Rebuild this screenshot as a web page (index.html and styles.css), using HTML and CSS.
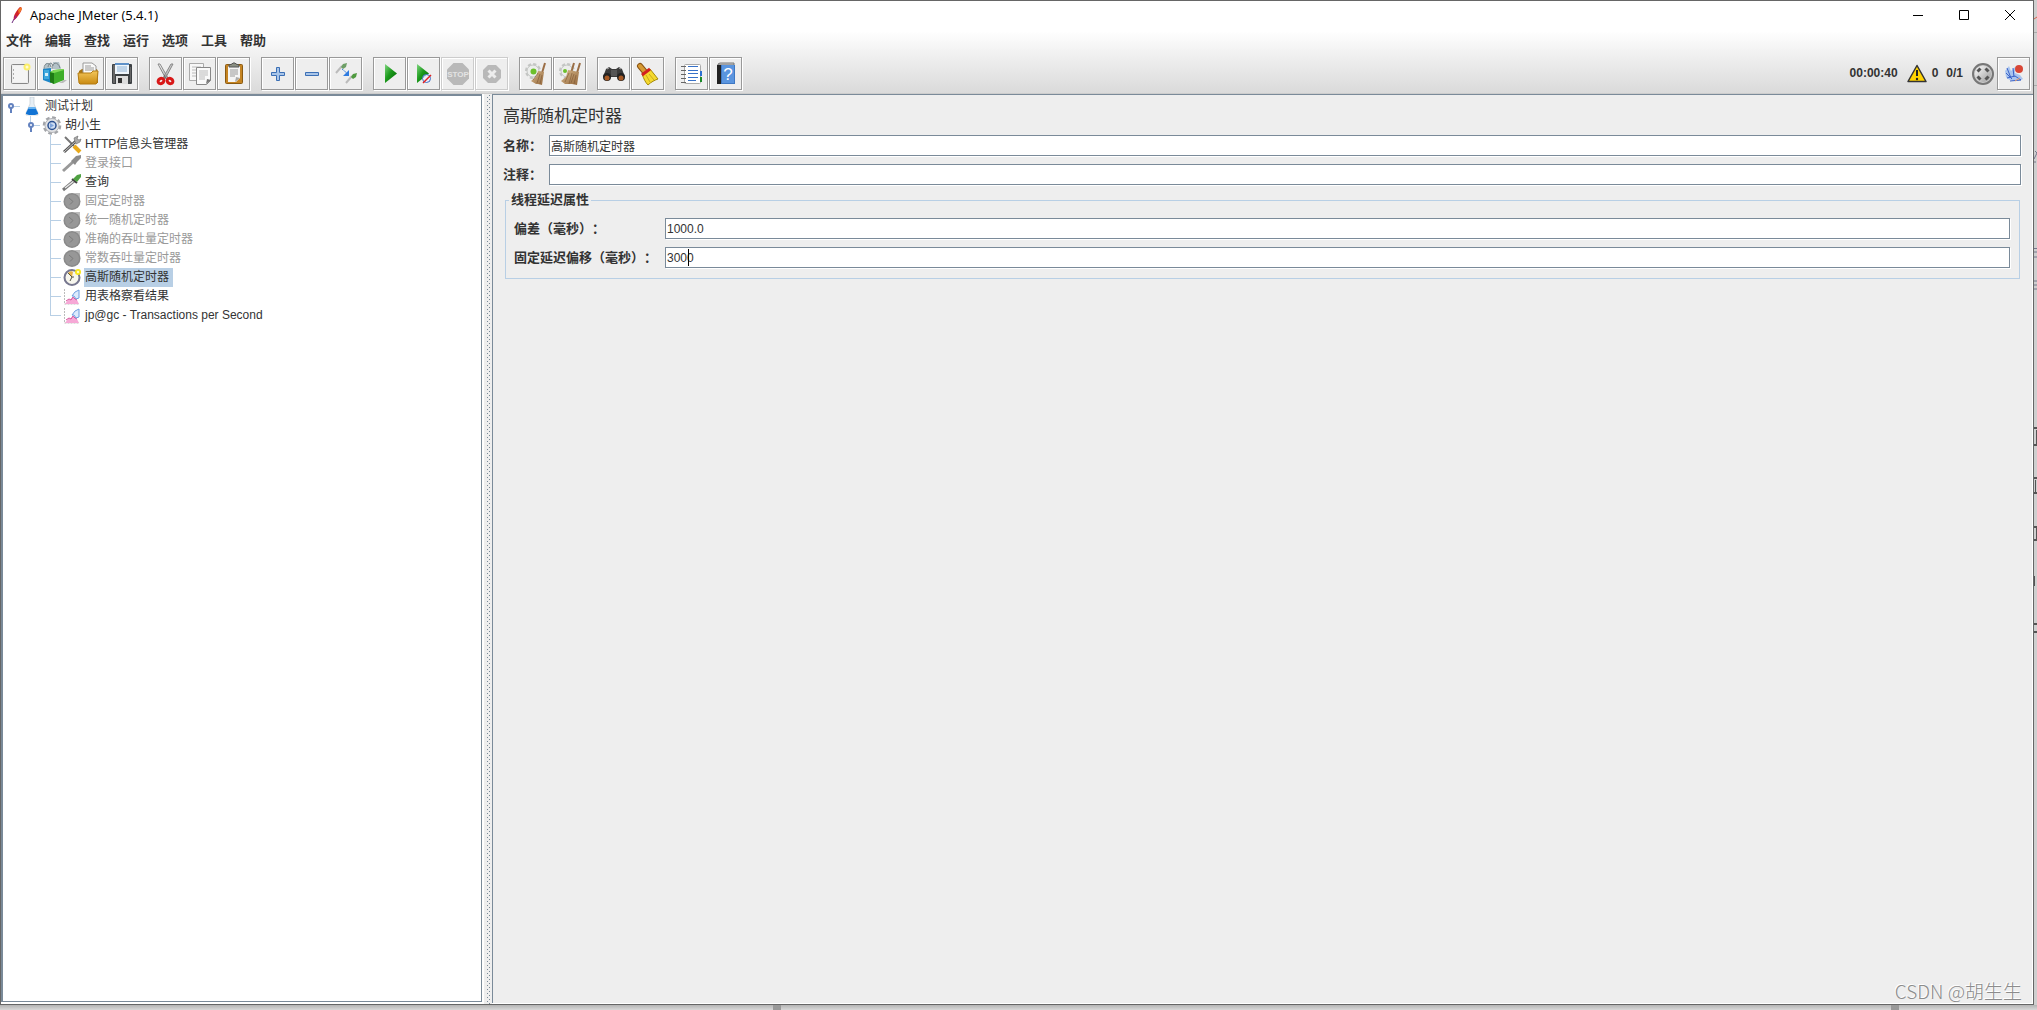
FILE: index.html
```
<!DOCTYPE html>
<html lang="zh-CN">
<head>
<meta charset="utf-8">
<title>Apache JMeter (5.4.1)</title>
<link rel="stylesheet" href="styles.css">
</head>
<body>
<svg class="defs" width="0" height="0" aria-hidden="true">
  <defs>
    <linearGradient id="steel" x1="0" y1="0" x2="1" y2="1"><stop offset="0" stop-color="#fff"/><stop offset="1" stop-color="#999"/></linearGradient>
    <linearGradient id="gold" x1="0" y1="0" x2="0" y2="1"><stop offset="0" stop-color="#f3c65a"/><stop offset="1" stop-color="#c98a12"/></linearGradient>
    <linearGradient id="play" x1="0" y1="0" x2="1" y2="1"><stop offset="0" stop-color="#7fd67f"/><stop offset=".45" stop-color="#1c9a1c"/><stop offset="1" stop-color="#006400"/></linearGradient>
    <linearGradient id="straw" x1="0" y1="0" x2="1" y2="1"><stop offset="0" stop-color="#d8b98c"/><stop offset="1" stop-color="#94683c"/></linearGradient>
    <symbol id="clock" viewBox="0 0 20 19"><path d="M13 1h5v6z" fill="#bbb"/><circle cx="10" cy="9.500" r="8.500" fill="#8a8a8a"/><circle cx="10" cy="9.500" r="7" fill="#979797"/><path d="M7 6l4 3.500-3 3" fill="none" stroke="#7c7c7c"/></symbol>
    <symbol id="chart" viewBox="0 0 20 19"><path d="M2.500 2v15h15" fill="none" stroke="#bbb" stroke-dasharray="2 1"/><path d="M3 17l3-4 2 0 3-3 2 2 2 1 2 4z" fill="#f6a8d6"/><path d="M4 14l3-2 2 1 2-3 2 2 2 1" fill="none" stroke="#d64f9b"/><path d="M10 9l3-4 4-2v8l-3 1z" fill="#dcebfd"/><path d="M10 9l3-4 4-2v8l-3 1-2-3z" fill="none" stroke="#6f9ee0"/></symbol>
  </defs>
</svg>
<div class="window">
  <header class="titlebar">
    <svg class="feather" viewBox="0 0 12 16" aria-hidden="true"><path d="M10 0c1 1 1 3-1 6S5 12 3 13c-1-2 0-5 2-8s3-5 5-5z" fill="#d22128"/><path d="M7 3l3-3 1 2-3 5z" fill="#f27a24"/><path d="M4 8l-1 5 3-3z" fill="#9b2480"/><path d="M3 12l-2 4" stroke="#6d2a7c"/></svg>
    <h1>Apache JMeter (5.4.1)</h1>
    <div class="wincontrols">
      <button aria-label="最小化"><svg viewBox="0 0 12 12"><path d="M1 6.500h10" /></svg></button>
      <button aria-label="最大化"><svg viewBox="0 0 12 12"><path d="M1.500 1.500h9v9h-9z"/></svg></button>
      <button aria-label="关闭"><svg viewBox="0 0 12 12"><path d="M1 1l10 10M11 1L1 11"/></svg></button>
    </div>
  </header>
  <nav class="menubar"><button>文件</button><button>编辑</button><button>查找</button><button>运行</button><button>选项</button><button>工具</button><button>帮助</button></nav>
  <div class="toolbar">
    <div class="group">
      <button aria-label="新建"><svg viewBox="0 0 31 31"><rect x="7.500" y="6.500" width="17" height="19" rx="1" fill="#eee" stroke="#888"/><path d="M9 8h14v16H9z" fill="#f4f4f4"/><path d="M9 12h1M9 16h1M9 20h1" stroke="#666"/><circle cx="23" cy="9" r="3.500" fill="#fbee6a"/><circle cx="23" cy="9" r="1.500" fill="#fffbd0"/></svg></button>
      <button aria-label="模板"><svg viewBox="0 0 31 31"><path d="M8 5h6l-2 6H6zM15 4h6l2 7h-8z" fill="#b4c2c8"/><path d="M6 11c0-7 6-7 7-2M14 11c0-7 6-8 8-1M10 9c1-5 4-5 5-1" fill="none" stroke="#7a858a"/><path d="M5 11l8-1v15l-8-3z" fill="#1c86c8"/><path d="M6 12h5v9H6z" fill="#3fa9dd"/><path d="M7 15h3v3H7z" fill="#d5eefa"/><path d="M12 14l4-2 10-1v11l-10 4-4-2z" fill="#3fae2a"/><path d="M12 14l4 1v11l-4-2z" fill="#1e7b15"/><path d="M16 15l10-3v-1l-10 1-4 2z" fill="#7ed957"/><path d="M21 25l5-3h3l-4 3z" fill="#999" opacity=".6"/></svg></button>
      <button aria-label="打开"><svg viewBox="0 0 31 31"><path d="M7 13l3-2h15l1 3v11H7z" fill="#a87412"/><path d="M11 5h9l4 3v9H11z" fill="#fafafa" stroke="#999"/><path d="M13 8h6M13 10h9M13 12h9" stroke="#999"/><path d="M6 15h13l2-2h5l-1 12-1 1H8l-1-1z" fill="url(#gold)" stroke="#b47d15"/></svg></button>
      <button aria-label="保存"><svg viewBox="0 0 31 31"><rect x="6" y="6" width="20" height="20" rx="1" fill="#3d4144"/><path d="M7 7h2v18H7zM24 9h1v15h-1z" fill="#666"/><rect x="9" y="5" width="14" height="11" fill="#eef5fb"/><path d="M9 5h14v2H9z" fill="#5f91c8"/><path d="M11 9h10M11 11h10M11 13h10" stroke="#8fb2d5"/><rect x="10" y="18" width="12" height="8" fill="#ddd"/><rect x="12" y="20" width="4" height="5" fill="#333"/></svg></button>
    </div>
    <div class="group">
      <button aria-label="剪切"><svg viewBox="0 0 31 31"><path d="M8 6l2 0 8 14-2 1zM23 6l-2 0-8 14 2 1z" fill="url(#steel)" stroke="#888"/><ellipse cx="11" cy="23" rx="3" ry="2.500" fill="none" stroke="#d81818" stroke-width="3" transform="rotate(-30 11 23)"/><ellipse cx="20" cy="23" rx="3" ry="2.500" fill="none" stroke="#d81818" stroke-width="3" transform="rotate(30 20 23)"/><path d="M15 17v3" stroke="#555"/></svg></button>
      <button aria-label="复制"><svg viewBox="0 0 31 31"><path d="M5.500 5.500h14v17h-14z" fill="#f7f7f7" stroke="#aaa"/><path d="M8 9h9M8 12h4M8 15h4M8 18h4" stroke="#bbb"/><path d="M12.500 9.500h14v13l-4 4h-10z" fill="#fafafa" stroke="#888"/><path d="M15 13h9M15 15h9M15 17h9M15 19h6M15 21h6" stroke="#bbb"/><path d="M22 26l1-5 4 1z" fill="#777"/></svg></button>
      <button aria-label="粘贴"><svg viewBox="0 0 31 31"><rect x="7.500" y="6.500" width="17" height="19" rx="1" fill="#c58422" stroke="#8a5a12"/><path d="M10 8h12v12l-4 4h-8z" fill="#f5f5f5"/><path d="M12 12h8M12 14h8M12 16h8M12 18h5" stroke="#999"/><path d="M17 24l1-5 4 1z" fill="#aaa"/><path d="M11 9V7l3-1 1-1h2l1 1 3 1v2z" fill="#8a8f83" stroke="#555"/></svg></button>
    </div>
    <div class="group">
      <button aria-label="展开"><svg viewBox="0 0 31 31"><path d="M14.500 9.500h3v5h5v3h-5v5h-3v-5h-5v-3h5z" fill="#a9c5e8" stroke="#3b6fb5"/></svg></button>
      <button aria-label="折叠"><svg viewBox="0 0 31 31"><path d="M9.500 14.500h13v3h-13z" fill="#a9c5e8" stroke="#3b6fb5"/></svg></button>
      <button aria-label="切换"><svg viewBox="0 0 31 31"><path d="M6 15l6-7" stroke="#bbb" stroke-width="2"/><path d="M11 9l2-3 4-1-1 4-3 2z" fill="#6d9f66"/><path d="M16 25l6-7" stroke="#bbb" stroke-width="2"/><path d="M21 19l2-3 4-1-1 4-3 2z" fill="#4f9a3f"/><path d="M12 11l6 5" stroke="#2f7be0" stroke-dasharray="2 1"/><path d="M19 12v6h-6z" fill="#2f7be0"/></svg></button>
    </div>
    <div class="group">
      <button aria-label="启动"><svg viewBox="0 0 31 31"><path d="M11 6l12 9.500L11 25z" fill="url(#play)"/></svg></button>
      <button aria-label="不停顿启动"><svg viewBox="0 0 31 31"><path d="M9 6l12 9.500L9 25z" fill="url(#play)"/><circle cx="18.500" cy="20.500" r="4" fill="#eef" fill-opacity=".8" stroke="#3b6fc5"/><path d="M15 25l8-8" stroke="#e02020" stroke-width="1.500"/></svg></button>
      <button disabled aria-label="停止"><svg viewBox="0 0 31 31"><path d="M11.500 5h9L27 11.500v9L20.500 27h-9L5 20.500v-9z" fill="#b9b9b9"/><text x="16" y="19" text-anchor="middle" class="stoptext">STOP</text></svg></button>
      <button disabled aria-label="关闭线程"><svg viewBox="0 0 31 31"><path d="M12 7h8l5 5v8l-5 5h-8l-5-5v-8z" fill="#b9b9b9"/><path d="M12.500 12.500l7 7M19.500 12.500l-7 7" stroke="#ededed" stroke-width="3"/></svg></button>
    </div>
    <div class="group">
      <button aria-label="清除"><svg viewBox="0 0 31 31"><circle cx="13" cy="13" r="6.500" fill="none" stroke="#c4c6c4" stroke-width="3" stroke-dasharray="3 2"/><circle cx="13" cy="13" r="6" fill="#eceeec" stroke="#c4c6c4"/><circle cx="13.500" cy="13.500" r="3" fill="#6cc02c"/><path d="M25 5l-3 10" stroke="#9b6e45" stroke-width="2"/><path d="M18 13l6 1-2 13-4-1-2 0-5-3 5-4z" fill="url(#straw)"/><path d="M20 16l-3 9M22 17l-2 9M18 15l-5 7" stroke="#7d5734" stroke-width=".6"/></svg></button>
      <button aria-label="清除全部"><svg viewBox="0 0 31 31"><circle cx="13" cy="13" r="6.500" fill="none" stroke="#c4c6c4" stroke-width="3" stroke-dasharray="3 2"/><circle cx="13" cy="13" r="6" fill="#eceeec" stroke="#c4c6c4"/><circle cx="11" cy="13" r="2" fill="#6cc02c"/><path d="M20 5l-3 10M26 5l-3 10" stroke="#9b6e45" stroke-width="2"/><path d="M14 12l11 2-2 13-5-1-7 0-4-3 5-4z" fill="url(#straw)"/><path d="M15 15l-4 9M18 15l-3 11M20 16l-3 9M22 17l-2 9" stroke="#7d5734" stroke-width=".6"/></svg></button>
    </div>
    <div class="group">
      <button aria-label="查找"><svg viewBox="0 0 31 31"><path d="M5 19l3-8 3-2 3 2h4l3-2 3 2 3 8z" fill="#3a3a3a"/><circle cx="9" cy="19" r="4" fill="#222"/><circle cx="23" cy="19" r="4" fill="#222"/><circle cx="9" cy="20" r="2.500" fill="#a85a24"/><circle cx="23" cy="20" r="2.500" fill="#a85a24"/><path d="M13 12h6v6h-6z" fill="#555"/><path d="M9 11l2-1M21 10l2 1" stroke="#aaa"/></svg></button>
      <button aria-label="清除查找"><svg viewBox="0 0 31 31"><path d="M8 8l5 6" stroke="#8a5514" stroke-width="6" stroke-linecap="round"/><path d="M8 8l5 6" stroke="#d79b35" stroke-width="4" stroke-linecap="round"/><path d="M10 16l8-5 8 10c-3 1-7 3-10 6-3-3-4-6-6-11z" fill="#f5d92e" stroke="#a58a0a"/><path d="M14 17l4 7M17 16l5 6" stroke="#c9ac1c"/><path d="M10 17l8-6" stroke="#d32020" stroke-width="3"/></svg></button>
    </div>
    <div class="group">
      <button aria-label="函数助手"><svg viewBox="0 0 31 31"><rect x="8.500" y="6.500" width="16" height="19" rx="1" fill="#fff" stroke="#aaa"/><path d="M5 8.500h5M5 12.500h5M5 16.500h5M5 20.500h5M5 24.500h5" stroke="#666"/><path d="M12 8.500h10M12 12.500h10M12 15.500h10M12 19.500h10M12 22.500h8" stroke="#3771c8"/><path d="M24 13h2v5h-2z" fill="#2b6fd0"/><path d="M24 19h2v5h-2z" fill="#1b8a28"/></svg></button>
      <button aria-label="帮助"><svg viewBox="0 0 31 31"><path d="M8 6l2-1h14v2H8z" fill="#ccc" stroke="#777"/><rect x="7" y="7" width="18" height="19" fill="#3f78c3"/><rect x="12" y="7" width="12" height="18" fill="#5a95df"/><rect x="7" y="7" width="4" height="19" fill="#222"/><text x="18" y="22" text-anchor="middle" class="helptext">?</text></svg></button>
    </div>
    <div class="status">
      <span class="time">00:00:40</span>
      <svg class="warn" viewBox="0 0 20 19" aria-label="警告"><path d="M10 1.500L19 17.500H1z" fill="#ffd200" stroke="#333" stroke-width="1.500" stroke-linejoin="round"/><path d="M10 6v6" stroke="#222" stroke-width="2"/><circle cx="10" cy="15" r="1.200" fill="#222"/></svg>
      <span class="errors">0</span>
      <span class="threads">0/1</span>
      <svg class="orb" viewBox="0 0 22 22" aria-hidden="true"><circle cx="11" cy="11" r="10" fill="#ccc" stroke="#777" stroke-width="2"/><circle cx="11" cy="11" r="8" fill="url(#steel)"/><path d="M5.500 8.500l3-3M13.500 5.500l3 3M16.500 13.500l-3 3M8.500 16.500l-3-3" stroke="#555" stroke-width="3"/></svg>
      <button aria-label="插件管理"><svg viewBox="0 0 31 31"><path d="M7 13l4-5 2 5 4-4 0 6 5 2 3 4c-4 3-14 3-17-2z" fill="#a9c5ef"/><path d="M9 10l4 10M8 15l6 6M15 10l1 9M12 23l11-1M9 20l8-2 6 4" stroke="#3a62c8" fill="none"/><path d="M17 23l5-3" stroke="#e8a070"/><circle cx="21" cy="11" r="4" fill="#d84635"/></svg></button>
    </div>
  </div>
  <main class="split">
    <section class="treepane" aria-label="测试计划树">
      <ul class="tree">
        <li class="row lvl0"><svg class="knob" viewBox="0 0 12 19"><path d="M3 9.500h9" stroke="#b8cfe5"/><circle cx="3" cy="9" r="2" fill="#fff" stroke="#6382bf" stroke-width="2"/><path d="M3 11v5" stroke="#6382bf" stroke-width="2"/></svg><svg class="icon" viewBox="0 0 20 19"><path d="M8 0h4v7l4 9v2H4v-2l4-9z" fill="#e6eef5" stroke="#c3cbd3" stroke-width=".7"/><path d="M7 10h6l3 6v1l-3 1H7l-3-1v-1z" fill="#1173d4"/><path d="M7 10h6l1 2H6z" fill="#69b4f2"/></svg><span>测试计划</span></li>
        <li class="row lvl1"><svg class="knob" viewBox="0 0 12 19"><path d="M3 9.500h9M2.500 0v7" stroke="#b8cfe5"/><circle cx="3" cy="9" r="2" fill="#fff" stroke="#6382bf" stroke-width="2"/><path d="M3 11v5" stroke="#6382bf" stroke-width="2"/></svg><svg class="icon" viewBox="0 0 20 19"><circle cx="10" cy="9.500" r="7.800" fill="none" stroke="#a2a4a8" stroke-width="3" stroke-dasharray="3.600 2.500"/><circle cx="10" cy="9.500" r="7" fill="#e2e3e5" stroke="#b2b4b8"/><circle cx="10" cy="9.500" r="4" fill="#cddcf2" stroke="#2c5190" stroke-width="1.500"/><path d="M8 7l4 2.500L8 12z" fill="#7fa5dc"/></svg><span>胡小生</span></li>
        <li class="row leaf"><svg class="icon" viewBox="0 0 20 19"><path d="M3 2l9 9" stroke="#777" stroke-width="2"/><path d="M2 17L14 6" stroke="#555" stroke-width="3"/><path d="M2 17L14 6" stroke="#ccc"/><path d="M13 7l-1-4 4-2-1 3 2 1 2-1-1 3-4 2z" fill="#aaa" stroke="#666" stroke-width=".6"/><path d="M12 11l6 6" stroke="#e9a91b" stroke-width="4"/></svg><span>HTTP信息头管理器</span></li>
        <li class="row leaf off"><svg class="icon" viewBox="0 0 20 19"><path d="M1 17L12 7" stroke="#999" stroke-width="3"/><path d="M9 7l5-5 5-1 0 3-4 4-2 3z" fill="#8c8c8c"/></svg><span>登录接口</span></li>
        <li class="row leaf"><svg class="icon" viewBox="0 0 20 19"><path d="M1 17L13 7" stroke="#777" stroke-width="3"/><path d="M3 15L12 8" stroke="#e8e8e8" stroke-width="1.500"/><path d="M10 6l5 4" stroke="#444" stroke-width="2"/><path d="M11 6l4-4 4-1 0 3-4 5z" fill="#4fa142"/></svg><span>查询</span></li>
        <li class="row leaf off"><svg class="icon"><use href="#clock"/></svg><span>固定定时器</span></li>
        <li class="row leaf off"><svg class="icon"><use href="#clock"/></svg><span>统一随机定时器</span></li>
        <li class="row leaf off"><svg class="icon"><use href="#clock"/></svg><span>准确的吞吐量定时器</span></li>
        <li class="row leaf off"><svg class="icon"><use href="#clock"/></svg><span>常数吞吐量定时器</span></li>
        <li class="row leaf selected"><svg class="icon" viewBox="0 0 20 19"><circle cx="10" cy="9.500" r="7.500" fill="#f7f6ee" stroke="#77778f" stroke-width="2"/><path d="M10 9L6 5c2-2 4-2 5-1z" fill="#e8b54a"/><path d="M6 5l4 4-2 4M10 9h2" fill="none" stroke="#554"/><circle cx="16" cy="4" r="3" fill="#f8e71c"/><circle cx="16" cy="4" r="1.200" fill="#fffbc0"/></svg><span>高斯随机定时器</span></li>
        <li class="row leaf"><svg class="icon"><use href="#chart"/></svg><span>用表格察看结果</span></li>
        <li class="row leaf last"><svg class="icon"><use href="#chart"/></svg><span>jp@gc - Transactions per Second</span></li>
      </ul>
    </section>
    <div class="divider" role="separator"></div>
    <form class="editor">
      <h2>高斯随机定时器</h2>
      <div class="field"><label for="name">名称：</label><input id="name" type="text" value="高斯随机定时器"></div>
      <div class="field"><label for="comment">注释：</label><input id="comment" type="text" value=""></div>
      <fieldset>
        <legend>线程延迟属性</legend>
        <div class="field"><label for="deviation">偏差（毫秒）：</label><input id="deviation" type="text" value="1000.0"></div>
        <div class="field caretfield"><label for="offset">固定延迟偏移（毫秒）：</label><input id="offset" type="text" value="3000"><i class="caret"></i></div>
      </fieldset>
    </form>
  </main>
  <div class="watermark">CSDN @胡生生</div>
</div>
<svg class="behind" viewBox="0 0 3 1005" preserveAspectRatio="none" aria-hidden="true"><path d="M0 19l3-2" stroke="#d9604c"/><path d="M0 32.500h3M0 85.500h3" stroke="#aaa"/><path d="M1 151l2 2-3 6M0 162h2M0 248.500h3M0 252h3M0 257h3M0 281h3M0 285h3M0 289h3" stroke="#77778c" fill="none"/><path d="M0 428h3M0 445h3M0 478h3M0 493h3M0 527h3M0 540h3M0 624h3M0 632h3" stroke="#555" stroke-width="2"/><path d="M2.500 430v14M1.500 480v12M2.500 528v11M.500 576v10" stroke="#555"/></svg>
<div class="below"><i></i><i></i></div>
</body>
</html>
```
FILE: styles.css
```
* { box-sizing: border-box; }

body {
  margin: 0;
  min-height: 100vh;
  display: grid;
  grid-template-columns: 1fr 3px;
  grid-template-rows: 1fr 5px;
  background: #c8c8c8;
  color: #333;
  font: 12px/19px "Liberation Sans", "Noto Sans CJK SC", sans-serif;
  text-spacing-trim: space-all;
}

.defs { position: absolute; }

h1, h2, ul { margin: 0; padding: 0; font-weight: normal; }

button { margin: 0; padding: 0; border: 0; background: none; color: inherit; font: inherit; }

.window {
  position: relative;
  display: flex;
  flex-direction: column;
  border: 1px solid #666;
  background: #fff;
}

/* Title bar and menus */
.titlebar {
  display: flex;
  align-items: center;
  height: 30px;
  padding: 0 0 2px 10px;
}

.feather { width: 12px; height: 16px; }

.titlebar h1 {
  margin-left: 7px;
  flex: 1;
  color: #000;
  font: 13px/16px "Open Sans", sans-serif;
}

.wincontrols { display: flex; }
.wincontrols button { width: 46px; height: 28px; display: grid; place-items: center; }
.wincontrols svg { width: 12px; height: 12px; fill: none; stroke: #000; }

.menubar {
  display: flex;
  gap: 13px;
  height: 24px;
  padding-left: 5px;
  background: linear-gradient(#fff, #f0f0f0);
}

.menubar button { font-size: 13px; font-weight: bold; line-height: 20px; height: 20px; }

/* Toolbar */
.toolbar {
  display: flex;
  align-items: flex-start;
  gap: 11px;
  height: 39px;
  padding: 2px 3px 0 2px;
  background: linear-gradient(#f0f0f0, #dadada);
  border-bottom: 1px solid #ccc;
}

.group { display: flex; gap: 1px; }

.toolbar button {
  width: 33px;
  height: 33px;
  border: 1px solid #999;
  background: #eee;
  box-shadow: 1px 1px #fff, inset 1px 1px #fff;
}

.toolbar button:disabled { border-color: #ccc; }
.toolbar button svg { display: block; width: 31px; height: 31px; }

.stoptext { font: bold 8px "Liberation Sans", sans-serif; fill: #e4e4e4; }
.helptext { font: 17px "Liberation Sans", sans-serif; fill: #fff; }

.status {
  display: flex;
  align-items: center;
  margin-left: auto;
  font-weight: bold;
}

.warn { width: 20px; height: 19px; margin: 0 5px 0 9px; }
.threads { margin-left: 8px; }
.orb { width: 22px; height: 22px; margin: 0 3px 0 9px; }

/* Tree and editor panes */
.split {
  flex: 1;
  display: grid;
  grid-template-columns: 481px 10px 1fr;
}

.treepane {
  margin-bottom: 2px;
  border: solid #7a8a99;
  border-width: 2px 1px 1px 2px;
}

.tree { list-style: none; padding-top: 1px; }

.row { display: flex; height: 19px; white-space: nowrap; }
.row span { padding: 0 4px 0 1px; }
.knob { width: 12px; height: 19px; }
.icon { width: 20px; height: 19px; }

.lvl0 { padding-left: 5px; }
.lvl0 .icon { margin: 0 3px 0 2px; }
.lvl0 span { padding-left: 0; }
.lvl1 { padding-left: 25px; }
.lvl1 .icon { margin: 0 2px; }

.leaf { padding-left: 47px; }
.leaf::before {
  content: "";
  width: 10px;
  margin-right: 1px;
  border-left: 1px solid #b8cfe5;
  background: linear-gradient(#b8cfe5, #b8cfe5) 0 9px / 10px 1px no-repeat;
}
.last::before { height: 10px; }
.leaf .icon { margin-right: 2px; }
.off { color: #999; }
.selected span { background: #b8cfe5; }

.divider {
  margin-left: 2px;
  background:
    linear-gradient(#7a8a99 1px, transparent 1px) 3px 3px / 1px 4px repeat-y,
    linear-gradient(#7a8a99 1px, transparent 1px) 5px 5px / 1px 4px repeat-y,
    #eee;
}

.editor {
  margin-bottom: 1px;
  padding: 12px 12px 0 10px;
  border: solid #7a8a99;
  border-width: 1px 0 0 1px;
  background: #eee;
  box-shadow: inset -1px 0 #fff;
}

.editor h2 { font-size: 17px; line-height: 20px; }

.field { display: flex; align-items: center; margin-top: 8px; height: 21px; }

.field label { width: 46px; font-size: 13px; font-weight: bold; white-space: nowrap; }

.field input {
  flex: 1;
  min-width: 0;
  height: 21px;
  margin: 0;
  padding: 0 1px;
  border: 1px solid #7a8a99;
  background: #fff;
  box-shadow: 1px 1px #fff;
  color: #333;
  font: inherit;
}

fieldset {
  margin: 5px 1px 0 2px;
  padding: 0 9px 10px 8px;
  border: 1px solid #b8cfe5;
}

legend { margin-left: -5px; padding: 0 2px; font-size: 13px; font-weight: bold; line-height: 20px; }

fieldset .field label { width: 151px; }

.caretfield { position: relative; }
.caret { position: absolute; left: 174px; top: 2px; width: 1px; height: 17px; background: #000; }

.watermark {
  position: absolute;
  right: 11px;
  bottom: 1px;
  color: #8c8c8c;
  font: 300 19px/24px "Noto Sans CJK SC", sans-serif;
  text-shadow: -1px -1px #fff;
}

/* Strips of the desktop behind the window */
.behind { width: 3px; height: 100%; background: #cfcfcf; }

.below {
  grid-column: 1 / -1;
  display: flex;
  justify-content: space-between;
  padding: 0 138px 0 773px;
  background: linear-gradient(#b4b4b4, #d8d8d8);
}

.below i { width: 8px; background: #999; }
```
